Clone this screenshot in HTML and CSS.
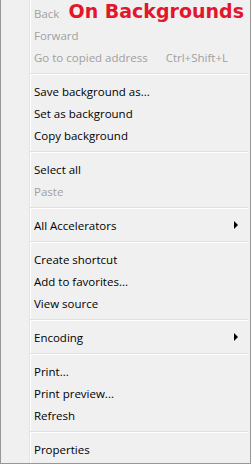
FILE: index.html
```html
<!DOCTYPE html>
<html>
<head>
<meta charset="utf-8">
<link rel="stylesheet" href="styles.css">
</head>
<body>
<div class="menu">
  <div class="title">On Backgrounds</div>
  <div class="item disabled"><span class="label">Back</span></div>
  <div class="item disabled"><span class="label">Forward</span></div>
  <div class="item disabled"><span class="label">Go to copied address</span><span class="key">Ctrl+Shift+L</span></div>
  <div class="sep"></div>
  <div class="item"><span class="label">Save background as...</span></div>
  <div class="item"><span class="label">Set as background</span></div>
  <div class="item"><span class="label">Copy background</span></div>
  <div class="sep"></div>
  <div class="item"><span class="label">Select all</span></div>
  <div class="item disabled"><span class="label">Paste</span></div>
  <div class="sep"></div>
  <div class="item"><span class="label">All Accelerators</span><span class="arrow"></span></div>
  <div class="sep"></div>
  <div class="item"><span class="label">Create shortcut</span></div>
  <div class="item"><span class="label">Add to favorites...</span></div>
  <div class="item"><span class="label">View source</span></div>
  <div class="sep"></div>
  <div class="item"><span class="label">Encoding</span><span class="arrow"></span></div>
  <div class="sep"></div>
  <div class="item"><span class="label">Print...</span></div>
  <div class="item"><span class="label">Print preview...</span></div>
  <div class="item"><span class="label">Refresh</span></div>
  <div class="sep"></div>
  <div class="item"><span class="label">Properties</span></div>
</div>
</body>
</html>
```

FILE: styles.css
```css
html, body {
  margin: 0;
  padding: 0;
  background: #ffffff;
}
.menu {
  position: relative;
  box-sizing: border-box;
  width: 251px;
  height: 464px;
  padding: 2px 2px 0 0;
  border-left: 1px solid #979797;
  border-right: 1px solid #979797;
  border-bottom: 1px solid #979797;
  background: linear-gradient(to right, #f0f0f0 28px, #e2e3e3 28px, #e2e3e3 29px, #ffffff 29px, #ffffff 30px, #f0f0f0 30px);
  font-family: "Open Sans", "Noto Sans", sans-serif;
  font-size: 11.5px;
  color: #000;
}
.title {
  position: absolute;
  top: 0;
  right: 6px;
  font-family: "DejaVu Sans", Verdana, sans-serif;
  font-weight: bold;
  font-size: 19px;
  color: #e3162c;
}
.item {
  display: flex;
  align-items: center;
  height: 22px;
  padding-left: 33px;
  padding-right: 10px;
}
.label {
  flex: 1;
}
.disabled {
  color: #a0a0a0;
}
.key {
  margin-right: 10px;
}
.arrow {
  width: 0;
  height: 0;
  border-top: 4px solid transparent;
  border-bottom: 4px solid transparent;
  border-left: 4px solid #000;
}
.sep {
  height: 12px;
  margin-left: 29px;
  display: flex;
  flex-direction: column;
  justify-content: center;
}
.sep::before {
  content: "";
  display: block;
  height: 1px;
  background: #e0e0e0;
  border-bottom: 1px solid #ffffff;
}
```
